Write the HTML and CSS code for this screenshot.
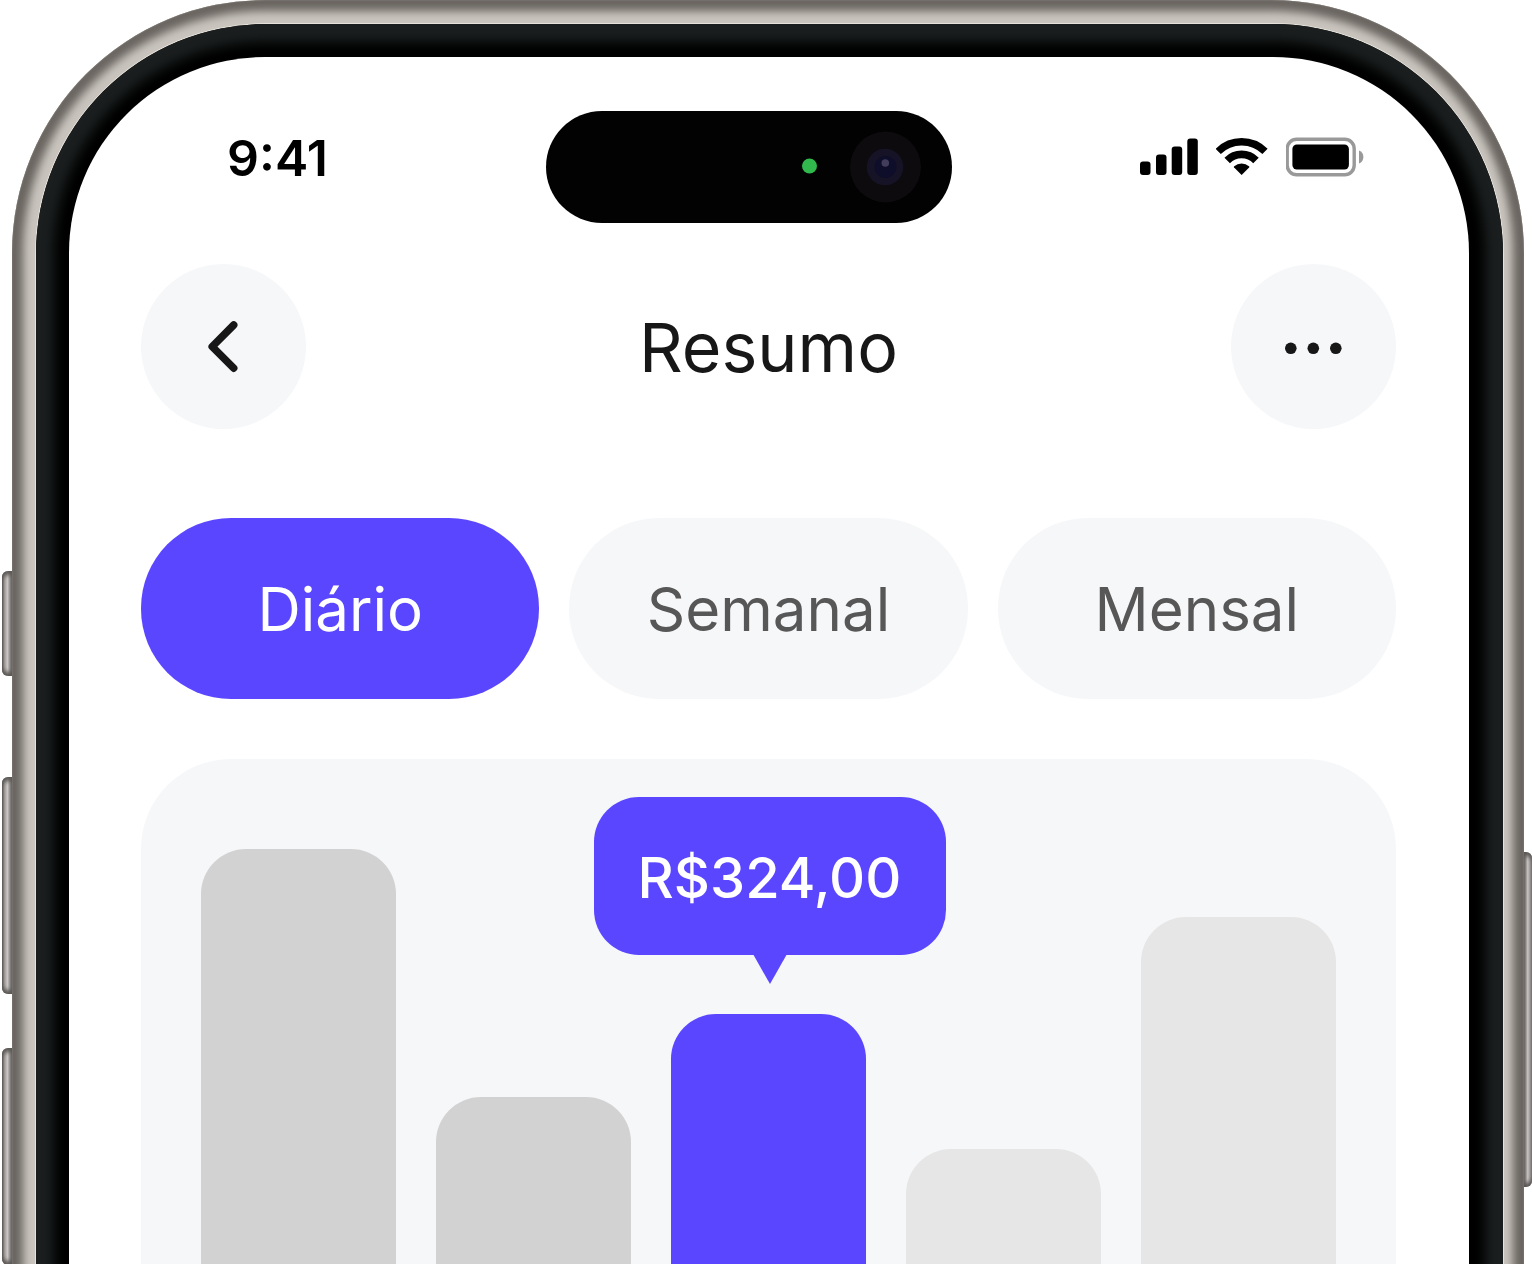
FILE: index.html
```html
<!DOCTYPE html>
<html lang="pt-BR">
<head>
    <meta charset="UTF-8">
    <meta name="viewport" content="width=device-width, initial-scale=1.0">
    <title>Resumo</title>
    <link rel="stylesheet" href="styles.css">
</head>
<body>
    <div class="stage">
        <div class="phone">
            <span class="side-button action"></span>
            <span class="side-button volume-up"></span>
            <span class="side-button volume-down"></span>
            <span class="side-button power"></span>

            <div class="bezel">
                <div class="screen">
                    <div class="status-bar">
                        <span class="time">9:41</span>

                        <svg class="island" viewBox="0 0 406 112" aria-hidden="true">
                            <rect width="406" height="112" rx="56" fill="#020202"/>
                            <circle cx="263.5" cy="55" r="7.5" fill="#32b94d"/>
                            <circle cx="339.5" cy="56" r="35.5" fill="#0d0b0d"/>
                            <circle cx="339" cy="56" r="18.3" fill="#161327"/>
                            <circle cx="339.5" cy="56" r="11" fill="#0e0d2a"/>
                            <circle cx="339.3" cy="52" r="3.8" fill="#423d5b"/>
                        </svg>

                        <div class="status-icons">
                            <svg width="58" height="40" viewBox="0 0 58 40" aria-hidden="true">
                                <rect x="0" y="24.5" width="10.5" height="13.5" rx="3"/>
                                <rect x="16" y="17.5" width="10.5" height="20.5" rx="3"/>
                                <rect x="31.7" y="9.5" width="10.5" height="28.5" rx="3"/>
                                <rect x="47.3" y="1.5" width="10.5" height="36.5" rx="3"/>
                            </svg>
                            <svg width="52" height="40" viewBox="0 0 52 40" aria-hidden="true">
                                <path d="M2.2 14.4A33.2 33.2 0 0 1 49 14.4" fill="none" stroke="#000" stroke-width="7.4"/>
                                <path d="M11.2 23.4A20.4 20.4 0 0 1 40 23.4" fill="none" stroke="#000" stroke-width="7.8"/>
                                <path d="M25.6 38L18.1 30.6Q17.4 29.9 18.2 29.2A11.5 11.5 0 0 1 33 29.2Q33.8 29.9 33.1 30.6Z"/>
                            </svg>
                            <svg width="78" height="40" viewBox="0 0 78 40" aria-hidden="true">
                                <rect x="1.2" y="2.2" width="67" height="35.6" rx="9.5" fill="none" stroke="#999" stroke-width="3.4"/>
                                <rect x="6.4" y="7.5" width="56.5" height="25" rx="4.5"/>
                                <path d="M73 13.5A7 7 0 0 1 73 26.5Z" fill="#999"/>
                            </svg>
                        </div>
                    </div>

                    <header class="top-bar">
                        <button class="round-button" type="button" aria-label="Voltar">
                            <svg width="60" height="60" viewBox="0 0 60 60" aria-hidden="true">
                                <path d="M39.7 8L18.2 29.6L39.7 51.2" fill="none" stroke="#171717" stroke-width="7.5" stroke-linecap="round" stroke-linejoin="round"/>
                            </svg>
                        </button>
                        <h1>Resumo</h1>
                        <button class="round-button" type="button" aria-label="Mais opções">
                            <svg width="60" height="60" viewBox="0 0 60 60" fill="#171717" aria-hidden="true">
                                <circle cx="7.8" cy="31.3" r="5.8"/>
                                <circle cx="30.3" cy="31.3" r="5.8"/>
                                <circle cx="52.8" cy="31.3" r="5.8"/>
                            </svg>
                        </button>
                    </header>

                    <nav class="tabs">
                        <button class="tab active" type="button">Diário</button>
                        <button class="tab" type="button">Semanal</button>
                        <button class="tab" type="button">Mensal</button>
                    </nav>

                    <section class="chart">
                        <div class="bar past" style="height: 100%"></div>
                        <div class="bar past" style="height: 67%"></div>
                        <div class="bar current" style="height: 78%">
                            <div class="tooltip">R$324,00</div>
                        </div>
                        <div class="bar" style="height: 60%"></div>
                        <div class="bar" style="height: 91%"></div>
                    </section>
                </div>
            </div>
        </div>
    </div>
</body>
</html>
```
FILE: styles.css
```css
* {
    margin: 0;
    padding: 0;
    box-sizing: border-box;
    font-family: Inter, "Liberation Sans", sans-serif;
}

body {
    background: #fff;
}

.stage {
    height: 100vh;
    overflow: hidden;
}

/* Titanium frame, dark on the outside and light next to the bezel */
.phone {
    position: relative;
    margin: 0 8px 0 12px;
    padding: 24px 21px 24px 24px;
    border-radius: 253px;
    background: #c9c5be;
    box-shadow:
        inset 0 0 2px 0 #8f8a85,
        inset 0 0 9px 11px #6a6560;
}

.side-button {
    position: absolute;
    left: -10px;
    width: 10px;
    border-radius: 6px 0 0 6px;
    background: linear-gradient(to right, #5c5856, #a19e9c 25%, #c8c5c4 55%, #8b8785 85%, #777370);
    box-shadow: inset 0 5px 4px -1px #5c5856, inset 0 -5px 4px -1px #5c5856;
}

.action {
    top: 571px;
    height: 105px;
}

.volume-up {
    top: 777px;
    height: 217px;
}

.volume-down {
    top: 1048px;
    height: 217px;
}

.power {
    top: 852px;
    left: auto;
    right: -8px;
    width: 8px;
    height: 335px;
    border-radius: 0 6px 6px 0;
    background: linear-gradient(to left, #8b8785, #c8c5c4 55%, #8b8785 85%, #777370);
}

.bezel {
    padding: 33px 34px 34px 33px;
    border-radius: 230px;
    background: #000;
    box-shadow:
        0 0 0 1px #e6e2db,
        inset 0 0 11px 18px #1a1e1e;
}

.screen {
    padding: 54px 73px 160px 72px;
    border-radius: 196px;
    background: #fff;
}

.status-bar {
    display: grid;
    grid-template-columns: 1fr 406px 1fr;
    align-items: center;
    margin-right: 32px;
    margin-left: -8px;
}

.time {
    padding-left: 94px;
    padding-bottom: 18px;
    font-size: 50px;
    font-weight: 600;
    line-height: 60px;
    color: #000;
}

.island {
    display: block;
    width: 406px;
    height: 112px;
}

.status-icons {
    display: flex;
    justify-content: flex-end;
    gap: 18px;
    padding-bottom: 20px;
}

.top-bar {
    display: flex;
    align-items: center;
    justify-content: space-between;
    margin-top: 41px;
}

.top-bar h1 {
    font-size: 68px;
    font-weight: 400;
    line-height: 80px;
    color: #171717;
}

button {
    border: none;
    cursor: pointer;
    background: #f6f7f9;
}

.round-button {
    display: flex;
    align-items: center;
    justify-content: center;
    width: 165px;
    height: 165px;
    border-radius: 50%;
}

.tabs {
    display: grid;
    grid-template-columns: repeat(3, 1fr);
    gap: 30px;
    margin-top: 89px;
}

.tab {
    height: 181px;
    border-radius: 90px;
    font-size: 60px;
    font-weight: 400;
    color: #575757;
}

.tab.active {
    background: #5a46ff;
    color: #fff;
}

.chart {
    display: grid;
    grid-template-columns: repeat(5, 1fr);
    align-items: end;
    gap: 40px;
    height: 930px;
    margin-top: 60px;
    padding: 90px 60px;
    border-radius: 90px;
    background: #f6f7f9;
}

.bar {
    position: relative;
    border-radius: 45px 45px 0 0;
    background: #e6e6e6;
}

.bar.past {
    background: #d2d2d2;
}

.bar.current {
    background: #5a46ff;
}

.tooltip {
    position: absolute;
    bottom: calc(100% + 59px);
    left: 50%;
    width: 352px;
    margin-left: -175px;
    padding: 46px 0 42px;
    border-radius: 45px;
    background: #5a46ff;
    color: #fff;
    font-size: 56px;
    font-weight: 500;
    line-height: 70px;
    text-align: center;
}

.tooltip::after {
    content: "";
    position: absolute;
    top: 100%;
    left: 50%;
    margin: -1px 0 0 -17px;
    border: 17px solid transparent;
    border-top: 30px solid #5a46ff;
    border-bottom: none;
}
```
